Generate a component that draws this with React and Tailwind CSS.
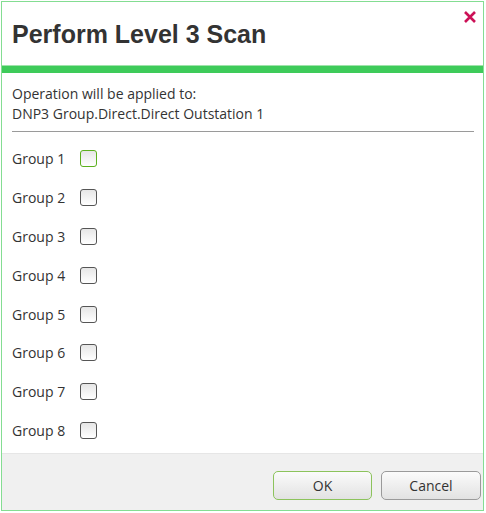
import React from "react";

const groups = [1, 2, 3, 4, 5, 6, 7, 8];

const App = () => {
  return (
    <div className="w-[486px] h-[513px] bg-white pt-px pl-px font-['Segoe_UI','Open_Sans',sans-serif] text-[#333]">
      <div className="w-[483px] h-[510px] border border-[#84dd92] flex flex-col">
        {/* header */}
        <div className="relative h-[64px] border-b border-[#9fe3aa] px-[10px] pt-[17px]">
          <h1 className="font-['Liberation_Sans',Arial,sans-serif] font-bold text-[25px] leading-[30px] text-[#333]">
            Perform Level 3 Scan
          </h1>
          <svg
            className="absolute right-[6px] top-[8px]"
            width="14"
            height="14"
            viewBox="0 0 14 14"
          >
            <path d="M2 2 L12 12 M12 2 L2 12" stroke="#cc1157" strokeWidth="2.6" />
          </svg>
        </div>
        <div className="h-[7px] bg-[#3ecb5a]" />

        {/* body */}
        <div className="flex-1 px-[10px] pt-[11px]">
          <p className="text-[14px] leading-[20px]">Operation will be applied to:</p>
          <p className="text-[14px] leading-[20px]">DNP3 Group.Direct.Direct Outstation 1</p>
          <div className="mt-[7px] -mr-px border-t border-[#9a9a9a]" />
          <div className="pt-[7px]">
            {groups.map((g) => (
              <div key={g} className="flex items-center h-[38.9px]">
                <span className="w-[68px] text-[14px]">Group {g}</span>
                <span
                  className={
                    g === 1
                      ? "w-[17px] h-[17px] rounded-[3px] border-[1.5px] border-[#5cb01e] bg-gradient-to-b from-[#e6e6e6] to-white"
                      : "w-[17px] h-[17px] rounded-[3px] border-[1.5px] border-[#555] bg-gradient-to-b from-[#e6e6e6] to-white"
                  }
                />
              </div>
            ))}
          </div>
        </div>

        {/* footer */}
        <div className="h-[57px] bg-[#f0f0f0] border-t border-[#e6e6e6] flex justify-end gap-[9px] pt-[17px] pr-[2px]">
          <button className="w-[99px] h-[29px] rounded-[5px] border border-[#8cc35c] bg-gradient-to-b from-[#fbfbfb] to-[#e2e2e2] text-[14px] text-[#333]">
            OK
          </button>
          <button className="w-[100px] h-[29px] rounded-[5px] border border-[#9a9a9a] bg-gradient-to-b from-[#fbfbfb] to-[#e2e2e2] text-[14px] text-[#333]">
            Cancel
          </button>
        </div>
      </div>
    </div>
  );
};

export default App;
